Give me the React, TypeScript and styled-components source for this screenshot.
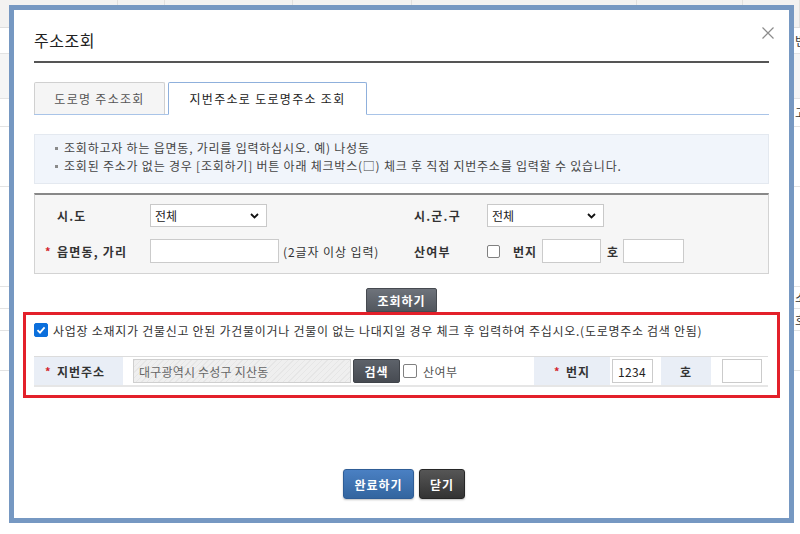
import React from "react";
import styled, { createGlobalStyle } from "styled-components";

const GlobalStyle = createGlobalStyle`
  html, body {
    margin: 0;
    padding: 0;
    background: #fff;
  }
  body {
    font-family: "Noto Sans CJK KR", "Noto Sans", sans-serif;
    font-size: 12px;
    color: #333;
  }
  * {
    box-sizing: border-box;
  }
`;

const colors = {
  frame: "#7698c2",
  red: "#e3202a",
  star: "#d3232b",
  labelBg: "#e9eef6",
  line: "#dcdcdc",
};

/* ---------- page behind the modal ---------- */

const Page = styled.div`
  position: relative;
  width: 800px;
  height: 534px;
  overflow: hidden;
  background: #fff;
`;

const BgHeader = styled.div`
  display: flex;
  height: 28px;
  background: #f3f2f1;
  border-bottom: 1px solid #dedede;
`;

const BgHeadCell = styled.div<{ w: number }>`
  flex: 0 0 ${(p) => p.w}px;
  border-right: 1px solid #e2e0de;
`;

const BgRow = styled.div<{ h: number; shade?: boolean }>`
  height: ${(p) => p.h}px;
  padding-left: 795px;
  border-bottom: 1px solid #e3e3e3;
  background: ${(p) => (p.shade ? "#f5f5f5" : "#fff")};
  font-size: 12px;
  line-height: ${(p) => p.h}px;
  white-space: nowrap;
  color: #333;
`;

/* ---------- modal ---------- */

const Modal = styled.div`
  position: absolute;
  left: 9px;
  top: 5px;
  width: 785px;
  height: 518px;
  border: 5px solid ${colors.frame};
  background: #fff;
  padding: 0 20px;
  display: flex;
  flex-direction: column;
`;

const Header = styled.div`
  position: relative;
  padding-top: 20px;
  height: 53px;
  border-bottom: 2px solid #555;
`;

const Title = styled.h1`
  margin: 0;
  font-size: 16px;
  line-height: 20px;
  font-weight: normal;
  color: #222;
  letter-spacing: 0.5px;
`;

const CloseButton = styled.button`
  position: absolute;
  right: -5px;
  top: 17px;
  width: 12px;
  height: 12px;
  padding: 0;
  border: 0;
  background: none;
  display: flex;
`;

const Tabs = styled.div`
  display: flex;
  margin-top: 19px;
  height: 33px;
  border-bottom: 1px solid #a9c4e8;
`;

const Tab = styled.div<{ active?: boolean }>`
  height: ${(p) => (p.active ? "33px" : "32px")};
  width: ${(p) => (p.active ? "199px" : "131px")};
  margin-right: 3px;
  display: flex;
  align-items: center;
  justify-content: center;
  font-size: 12px;
  letter-spacing: 1.3px;
  color: ${(p) => (p.active ? "#222" : "#555")};
  background: ${(p) => (p.active ? "#fff" : "#f5f5f5")};
  border: 1px solid ${(p) => (p.active ? "#8fb0dc" : "#d0d0d0")};
  border-bottom: ${(p) => (p.active ? "1px solid #fff" : "0")};
  border-radius: 2px 2px 0 0;
  margin-bottom: ${(p) => (p.active ? "-1px" : "0")};
`;

const InfoBox = styled.ul`
  margin: 19px 0 0;
  height: 50px;
  padding: 4px 0 0 20px;
  list-style: none;
  background: #f1f5fb;
  border: 1px solid #e4e9f0;
`;

const InfoItem = styled.li`
  display: flex;
  align-items: center;
  line-height: 18px;
  font-size: 12px;
  color: #444;
  letter-spacing: 0.78px;
  &::before {
    content: "";
    width: 3px;
    height: 3px;
    margin-right: 6px;
    background: #8a8a8a;
  }
`;

const SearchBox = styled.div`
  margin-top: 9px;
  height: 81px;
  padding: 9px 0 0;
  background: #f6f6f6;
  border: 1px solid #d3d3d3;
  border-top: 2px solid #888;
  display: grid;
  grid-template-columns: 115px 264px 73px 1fr;
  grid-template-rows: 23px 24px;
  row-gap: 12px;
  align-items: center;
`;

const Label = styled.div<{ indent: number }>`
  display: flex;
  align-items: center;
  padding-left: ${(p) => p.indent}px;
  font-weight: bold;
  font-size: 12px;
  color: #333;
  letter-spacing: 1.2px;
`;

const Star = styled.span`
  width: 12px;
  color: ${colors.star};
  font-size: 11px;
  font-weight: bold;
`;

const Field = styled.div`
  display: flex;
  align-items: center;
  height: 100%;
`;

const SelectWrap = styled.div`
  position: relative;
  width: 117px;
  height: 23px;
`;

const Select = styled.select`
  appearance: none;
  width: 100%;
  height: 100%;
  border: 1px solid #c9c9c9;
  background: #fff;
  padding: 0 4px;
  font-family: inherit;
  font-size: 12px;
  color: #222;
`;

const Chevron = styled.svg`
  position: absolute;
  right: 8px;
  top: 9px;
  pointer-events: none;
`;

const TextInput = styled.input<{ w: number }>`
  width: ${(p) => p.w}px;
  height: 24px;
  border: 1px solid #cbcbcb;
  background: #fff;
  padding: 0 5px;
  font-family: inherit;
  font-size: 12px;
  color: #222;
  flex-shrink: 0;
  letter-spacing: 0.3px;
`;

const Hint = styled.span`
  margin-left: 4px;
  color: #333;
  font-size: 12px;
  letter-spacing: 0.9px;
`;

const Box = styled.span<{ checked?: boolean }>`
  flex: 0 0 13px;
  width: 13px;
  height: 13px;
  border: 1px solid ${(p) => (p.checked ? "#0b6fdc" : "#808080")};
  border-radius: 2px;
  background: ${(p) => (p.checked ? "#0b6fdc" : "#fff")};
  display: flex;
  align-items: center;
  justify-content: center;
`;

const InlineBold = styled.span<{ ml: number }>`
  margin-left: ${(p) => p.ml}px;
  font-weight: bold;
  color: #333;
  letter-spacing: 1px;
`;

const Spaced = styled.span<{ ml: number }>`
  display: inline-flex;
  margin-left: ${(p) => p.ml}px;
`;

const CenterRow = styled.div`
  display: flex;
  justify-content: center;
`;

const QueryButton = styled.button`
  margin-top: 14px;
  width: 71px;
  height: 24px;
  border: 1px solid #464a50;
  border-radius: 2px 2px 0 0;
  background: linear-gradient(#6e737b, #52575e);
  color: #fff;
  font-family: inherit;
  font-weight: bold;
  font-size: 12px;
  letter-spacing: 1px;
  padding: 0;
`;

const ManualBox = styled.div`
  margin: 0 -11px;
  height: 86px;
  border: 3px solid ${colors.red};
  padding: 8px 9px 0 8px;
`;

const CheckLine = styled.label`
  display: flex;
  align-items: center;
  height: 14px;
  font-size: 12px;
  color: #333;
  gap: 5px;
  letter-spacing: 0.72px;
  white-space: nowrap;
`;

const BigBox = styled(Box)`
  flex: 0 0 14px;
  width: 14px;
  height: 14px;
`;

const AddrRow = styled.div`
  display: flex;
  margin-top: 19px;
  height: 31px;
  border-top: 1px solid ${colors.line};
  border-bottom: 2px solid #e6e6e6;
`;

const LabelCell = styled.div<{ w: number; center?: boolean }>`
  flex: 0 0 ${(p) => p.w}px;
  display: flex;
  align-items: center;
  justify-content: ${(p) => (p.center ? "center" : "flex-start")};
  padding-left: ${(p) => (p.center ? "0" : "11px")};
  background: ${colors.labelBg};
  font-weight: bold;
  color: #333;
  font-size: 12px;
  letter-spacing: 1px;
`;

const FieldCell = styled.div<{ w?: number; pl: number }>`
  flex: ${(p) => (p.w ? `0 0 ${p.w}px` : "1")};
  display: flex;
  align-items: center;
  padding-left: ${(p) => p.pl}px;
`;

const DisabledInput = styled.input`
  width: 218px;
  height: 24px;
  border: 1px solid #cfcfcf;
  padding: 0 5px;
  font-family: inherit;
  font-size: 12px;
  color: #666;
  background: repeating-linear-gradient(
    -45deg,
    #efefef 0 3px,
    #e6e6e6 3px 4px
  );
  letter-spacing: 0.2px;
`;

const DarkButton = styled.button`
  margin-left: 2px;
  width: 47px;
  height: 24px;
  border: 1px solid #40444a;
  border-radius: 2px;
  background: linear-gradient(#5d626a, #474b52);
  color: #fff;
  font-family: inherit;
  font-weight: bold;
  font-size: 12px;
  letter-spacing: 1px;
  padding: 0;
`;

const Plain = styled.span`
  margin-left: 6px;
  color: #555;
  font-size: 12px;
  letter-spacing: 0.5px;
`;

const Footer = styled.div`
  display: flex;
  justify-content: center;
  gap: 5px;
  margin-top: 71px;
  padding-left: 5px;
`;

const FooterButton = styled.button<{ variant: "primary" | "dark" }>`
  height: 30px;
  width: ${(p) => (p.variant === "primary" ? "71px" : "46px")};
  border-radius: 3px;
  border: 1px solid ${(p) => (p.variant === "primary" ? "#2f5d96" : "#262626")};
  background: ${(p) =>
    p.variant === "primary"
      ? "linear-gradient(#4a80c3, #33659f)"
      : "linear-gradient(#565656, #333)"};
  box-shadow: 0 1px 2px rgba(0, 0, 0, 0.25);
  color: #fff;
  font-family: inherit;
  font-weight: bold;
  font-size: 12px;
  letter-spacing: 1px;
  padding: 0;
`;

function ChevronIcon() {
  return (
    <Chevron width="9" height="6" viewBox="0 0 9 6">
      <path d="M1 1 L4.5 4.5 L8 1" fill="none" stroke="#111" strokeWidth="1.8" />
    </Chevron>
  );
}

function CheckMark() {
  return (
    <svg width="10" height="10" viewBox="0 0 10 10">
      <path d="M1.5 5.2 L4 7.6 L8.6 2.4" fill="none" stroke="#fff" strokeWidth="1.8" />
    </svg>
  );
}

const headCells = [118, 47, 128, 119, 225, 106, 57];

export default function App() {
  return (
    <Page>
      <GlobalStyle />
      <BgHeader>
        {headCells.map((w, i) => (
          <BgHeadCell key={i} w={w} />
        ))}
      </BgHeader>
      <BgRow h={26}>번</BgRow>
      <BgRow h={45} shade />
      <BgRow h={28}>고</BgRow>
      <BgRow h={60} />
      <BgRow h={100} />
      <BgRow h={22}>소</BgRow>
      <BgRow h={22}>호</BgRow>
      <BgRow h={40} />

      <Modal>
        <Header>
          <Title>주소조회</Title>
          <CloseButton aria-label="닫기">
            <svg width="12" height="12" viewBox="0 0 12 12">
              <path d="M0.5 0.5 L11.5 11.5 M11.5 0.5 L0.5 11.5" stroke="#8c8c8c" strokeWidth="1.2" />
            </svg>
          </CloseButton>
        </Header>

        <Tabs>
          <Tab>도로명 주소조회</Tab>
          <Tab active>지번주소로 도로명주소 조회</Tab>
        </Tabs>

        <InfoBox>
          <InfoItem>조회하고자 하는 읍면동, 가리를 입력하십시오. 예) 나성동</InfoItem>
          <InfoItem>
            조회된 주소가 없는 경우 [조회하기] 버튼 아래 체크박스(□) 체크 후 직접 지번주소를 입력할 수 있습니다.
          </InfoItem>
        </InfoBox>

        <SearchBox>
          <Label indent={22}>시.도</Label>
          <Field>
            <SelectWrap>
              <Select defaultValue="all">
                <option value="all">전체</option>
              </Select>
              <ChevronIcon />
            </SelectWrap>
          </Field>
          <Label indent={0}>시.군.구</Label>
          <Field>
            <SelectWrap>
              <Select defaultValue="all">
                <option value="all">전체</option>
              </Select>
              <ChevronIcon />
            </SelectWrap>
          </Field>

          <Label indent={10}>
            <Star>*</Star>읍면동, 가리
          </Label>
          <Field>
            <TextInput w={129} />
            <Hint>(2글자 이상 입력)</Hint>
          </Field>
          <Label indent={0}>산여부</Label>
          <Field>
            <Box />
            <InlineBold ml={13}>번지</InlineBold>
            <Spaced ml={5}>
              <TextInput w={59} />
            </Spaced>
            <InlineBold ml={6}>호</InlineBold>
            <Spaced ml={4}>
              <TextInput w={61} />
            </Spaced>
          </Field>
        </SearchBox>

        <CenterRow>
          <QueryButton>조회하기</QueryButton>
        </CenterRow>

        <ManualBox>
          <CheckLine>
            <BigBox checked>
              <CheckMark />
            </BigBox>
            사업장 소재지가 건물신고 안된 가건물이거나 건물이 없는 나대지일 경우 체크 후 입력하여 주십시오.(도로명주소 검색 안됨)
          </CheckLine>

          <AddrRow>
            <LabelCell w={89}>
              <Star>*</Star>지번주소
            </LabelCell>
            <FieldCell pl={10}>
              <DisabledInput disabled value="대구광역시 수성구 지산동" readOnly />
              <DarkButton>검색</DarkButton>
              <Spaced ml={3}>
                <BigBox />
              </Spaced>
              <Plain>산여부</Plain>
            </FieldCell>
            <LabelCell w={76} center>
              <Star>*</Star>번지
            </LabelCell>
            <FieldCell w={51} pl={2}>
              <TextInput w={41} defaultValue="1234" />
            </FieldCell>
            <LabelCell w={50} center>
              호
            </LabelCell>
            <FieldCell w={57} pl={11}>
              <TextInput w={40} />
            </FieldCell>
          </AddrRow>
        </ManualBox>

        <Footer>
          <FooterButton variant="primary">완료하기</FooterButton>
          <FooterButton variant="dark">닫기</FooterButton>
        </Footer>
      </Modal>
    </Page>
  );
}
